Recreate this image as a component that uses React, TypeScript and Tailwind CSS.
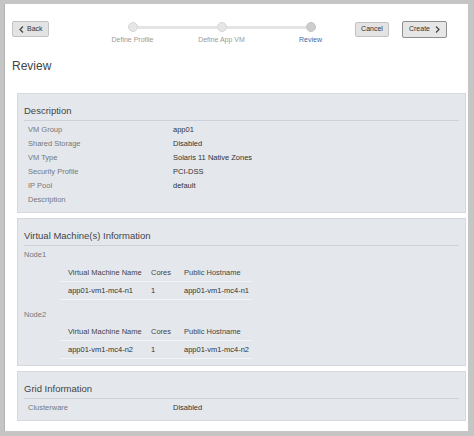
import React from 'react'

const font = { fontFamily: '"Liberation Sans", Arial, sans-serif' }

function Chevron({ dir }: { dir: 'left' | 'right' }) {
  return (
    <svg width="5" height="7" viewBox="0 0 5 7" className="shrink-0">
      {dir === 'left' ? (
        <polyline points="4,0.5 1,3.5 4,6.5" fill="none" stroke="#444" strokeWidth="1.2" />
      ) : (
        <polyline points="1,0.5 4,3.5 1,6.5" fill="none" stroke="#444" strokeWidth="1.2" />
      )}
    </svg>
  )
}

const steps = [
  { label: 'Define Profile', active: false },
  { label: 'Define App VM', active: false },
  { label: 'Review', active: true },
]

function Stepper() {
  return (
    <div className="grid grid-cols-3 w-[267px] ml-[39px] mt-[1px]">
      {steps.map((s, i) => (
        <div key={s.label} className="flex flex-col items-center">
          <div className="flex items-center w-full h-[10px]">
            <div className={`flex-1 h-[3px] ${i === 0 ? '' : 'bg-[#e4e4e4]'}`} />
            <div
              className={`w-[10px] h-[10px] rounded-full border ${
                s.active ? 'bg-[#cdcdcd] border-[#c4c4c4]' : 'bg-[#e6e6e6] border-[#d6d6d6]'
              }`}
            />
            <div className={`flex-1 h-[3px] ${i === steps.length - 1 ? '' : 'bg-[#e4e4e4]'}`} />
          </div>
          <span
            className={`mt-[3px] text-[7px] leading-[9px] ${
              s.active ? 'text-[#3f6aa6]' : 'text-[#9a9a9a]'
            }`}
          >
            {s.label}
          </span>
        </div>
      ))}
    </div>
  )
}

function Panel({ title, children }: { title: string; children: React.ReactNode }) {
  return (
    <div className="bg-[#e4e8ed] border border-[#d4d9df] px-[6px]">
      <div className="pt-[10px] pb-[2px] border-b border-[#cdd2d9]">
        <div className="text-[9.5px] leading-[14px] text-[#444]">{title}</div>
      </div>
      {children}
    </div>
  )
}

function InfoRows({ rows }: { rows: [string, string][] }) {
  return (
    <div className="pt-[2px]">
      {rows.map(([k, v]) => (
        <div key={k} className="flex h-[14px] items-center text-[7.5px]">
          <span className="w-[149px] pl-[4px] text-[#777]">{k}</span>
          <span className="text-[#333]">{v}</span>
        </div>
      ))}
    </div>
  )
}

function VmTable({ name }: { name: string }) {
  return (
    <div className="ml-[36px] w-[192px] text-[7.5px]">
      <div className="flex h-[18px] items-center border-b border-[#f1f3f6] text-[#444]">
        <span className="w-[83px] pl-[8px]">Virtual Machine Name</span>
        <span className="w-[33px] pl-[8px]">Cores</span>
        <span className="pl-[8px]">Public Hostname</span>
      </div>
      <div className="flex h-[18px] items-center border-b border-[#f1f3f6] text-[#333]">
        <span className="w-[83px] pl-[8px]">{name}</span>
        <span className="w-[33px] pl-[8px]">1</span>
        <span className="pl-[8px]">{name}</span>
      </div>
    </div>
  )
}

export default function App() {
  return (
    <div className="w-[474px] h-[436px] bg-[#c5c5c5] pt-[4px] pl-[4px] pr-[6px] pb-[5px]" style={font}>
      <div className="h-full bg-white border-l border-[#b3b3b3] pl-[7px] pr-[1px]">
        {/* toolbar */}
        <div className="flex items-start pt-[17px]">
          <button className="flex items-center gap-[3px] w-[37px] h-[16px] pl-[6px] bg-[#e3e3e3] border border-[#c3c3c3] rounded-[2px] text-[7px] text-[#333]">
            <Chevron dir="left" />
            <span>Back</span>
          </button>
          <Stepper />
          <button className="mt-[1px] w-[34px] h-[15px] bg-[#e3e3e3] border border-[#c3c3c3] rounded-[2px] text-[7px] text-[#333]">
            Cancel
          </button>
          <button className="ml-[13px] flex items-center justify-center gap-[5px] w-[45px] h-[17px] bg-[#e6e6e6] border border-[#8f8f8f] rounded-[2px] text-[7px] text-[#333]">
            <span>Create</span>
            <Chevron dir="right" />
          </button>
        </div>

        <div className="mt-[14px] text-[12px] leading-[16px] text-[#444]">Review</div>

        <div className="mt-[19px] ml-[5px] mr-[1px] flex flex-col gap-[5px]">
          <Panel title="Description">
            <div className="pb-[5px]">
              <InfoRows
                rows={[
                  ['VM Group', 'app01'],
                  ['Shared Storage', 'Disabled'],
                  ['VM Type', 'Solaris 11 Native Zones'],
                  ['Security Profile', 'PCI-DSS'],
                  ['IP Pool', 'default'],
                  ['Description', ''],
                ]}
              />
            </div>
          </Panel>

          <Panel title="Virtual Machine(s) Information">
            <div className="pt-[2px] pb-[6px] text-[7.5px]">
              <div className="h-[14px] flex items-center text-[#777]">Node1</div>
              <div className="mt-[2px]">
                <VmTable name="app01-vm1-mc4-n1" />
              </div>
              <div className="mt-[8px] h-[14px] flex items-center text-[#777]">Node2</div>
              <div className="mt-[1px]">
                <VmTable name="app01-vm1-mc4-n2" />
              </div>
            </div>
          </Panel>

          <Panel title="Grid Information">
            <div className="pb-[5px]">
              <InfoRows rows={[['Clusterware', 'Disabled']]} />
            </div>
          </Panel>
        </div>
      </div>
    </div>
  )
}
